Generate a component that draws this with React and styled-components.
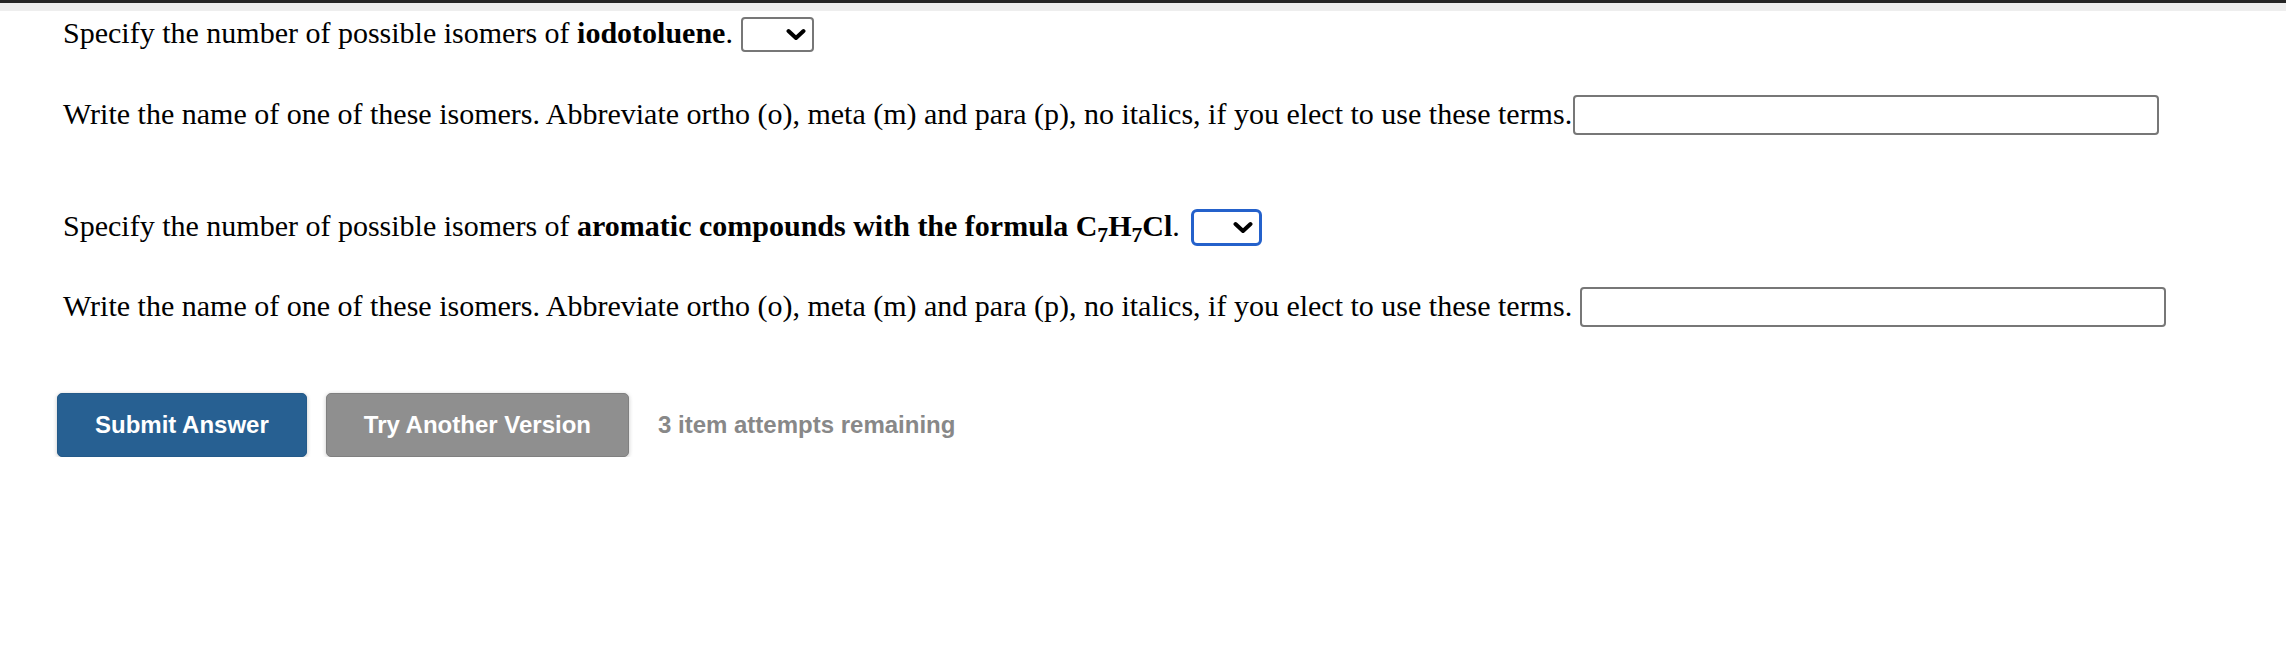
import React from 'react'
import styled, { createGlobalStyle } from 'styled-components'

const GlobalStyle = createGlobalStyle`
  html, body {
    margin: 0;
    padding: 0;
    background: #fff;
  }
  body {
    font-family: 'Liberation Serif', 'Times New Roman', serif;
    color: #000;
  }
`

const TopBar = styled.div`
  height: 3px;
  background: #262626;
  border-bottom: 8px solid #eeeeee;
`

const Content = styled.div`
  padding: 0 0 0 63px;
`

const Row = styled.div`
  display: flex;
  align-items: center;
  height: ${p => p.h}px;
  margin-top: ${p => p.top}px;
  font-size: 30px;
  white-space: nowrap;
`

const Prompt = styled.span`
  padding-bottom: 3px;
  b {
    font-weight: bold;
  }
  sub {
    font-size: 0.72em;
    line-height: 0;
    vertical-align: -0.28em;
  }
`

const SelectBox = styled.div`
  box-sizing: border-box;
  width: ${p => p.focused ? 71 : 73}px;
  height: ${p => p.focused ? 37 : 35}px;
  margin-left: ${p => p.gap}px;
  border: ${p => p.focused ? '3px solid #2461cb' : '2px solid #777'};
  border-radius: ${p => p.focused ? 6 : 4}px;
  background: #fff;
  display: flex;
  align-items: center;
  justify-content: flex-end;
  padding-right: 6px;
`

const TextInput = styled.input`
  box-sizing: border-box;
  width: 586px;
  height: 40px;
  margin: 0 0 0 ${p => p.gap}px;
  border: 2px solid #777;
  border-radius: 4px;
  background: #fff;
  font: inherit;
  outline: none;
`

const Chevron = () => (
  <svg width="20" height="13" viewBox="0 0 20 13">
    <path d="M2.5 3 L10 10 L17.5 3" fill="none" stroke="#000" strokeWidth="4" strokeLinecap="round" strokeLinejoin="round" />
  </svg>
)

const Actions = styled.div`
  display: flex;
  align-items: center;
  margin-top: 66px;
  margin-left: -6px;
`

const Button = styled.button`
  box-sizing: border-box;
  height: 64px;
  padding: 0 37px;
  margin-right: ${p => p.gap}px;
  border: 1px solid ${p => p.variant === 'primary' ? '#245a89' : '#808080'};
  border-radius: 5px;
  background: ${p => p.variant === 'primary' ? '#276092' : '#8f8f8f'};
  color: #fff;
  font-family: 'Liberation Sans', Arial, sans-serif;
  font-weight: bold;
  font-size: 24px;
  box-shadow: 0 1px 4px rgba(0, 0, 0, 0.22);
  cursor: pointer;
`

const Remaining = styled.span`
  font-family: 'Liberation Sans', Arial, sans-serif;
  font-weight: bold;
  font-size: 24px;
  color: #888;
`

export default function App () {
  return (
    <>
      <GlobalStyle />
      <TopBar />
      <Content>
        <Row h={35} top={6}>
          <Prompt>Specify the number of possible isomers of <b>iodotoluene</b>.</Prompt>
          <SelectBox gap={8}><Chevron /></SelectBox>
        </Row>
        <Row h={40} top={43}>
          <Prompt>Write the name of one of these isomers. Abbreviate ortho (o), meta (m) and para (p), no italics, if you elect to use these terms.</Prompt>
          <TextInput gap={1} />
        </Row>
        <Row h={37} top={74}>
          <Prompt>Specify the number of possible isomers of <b>aromatic compounds with the formula C<sub>7</sub>H<sub>7</sub>Cl</b>.</Prompt>
          <SelectBox gap={11} focused><Chevron /></SelectBox>
        </Row>
        <Row h={40} top={41}>
          <Prompt>Write the name of one of these isomers. Abbreviate ortho (o), meta (m) and para (p), no italics, if you elect to use these terms.</Prompt>
          <TextInput gap={8} />
        </Row>
        <Actions>
          <Button variant='primary' gap={19}>Submit Answer</Button>
          <Button gap={29}>Try Another Version</Button>
          <Remaining>3 item attempts remaining</Remaining>
        </Actions>
      </Content>
    </>
  )
}
